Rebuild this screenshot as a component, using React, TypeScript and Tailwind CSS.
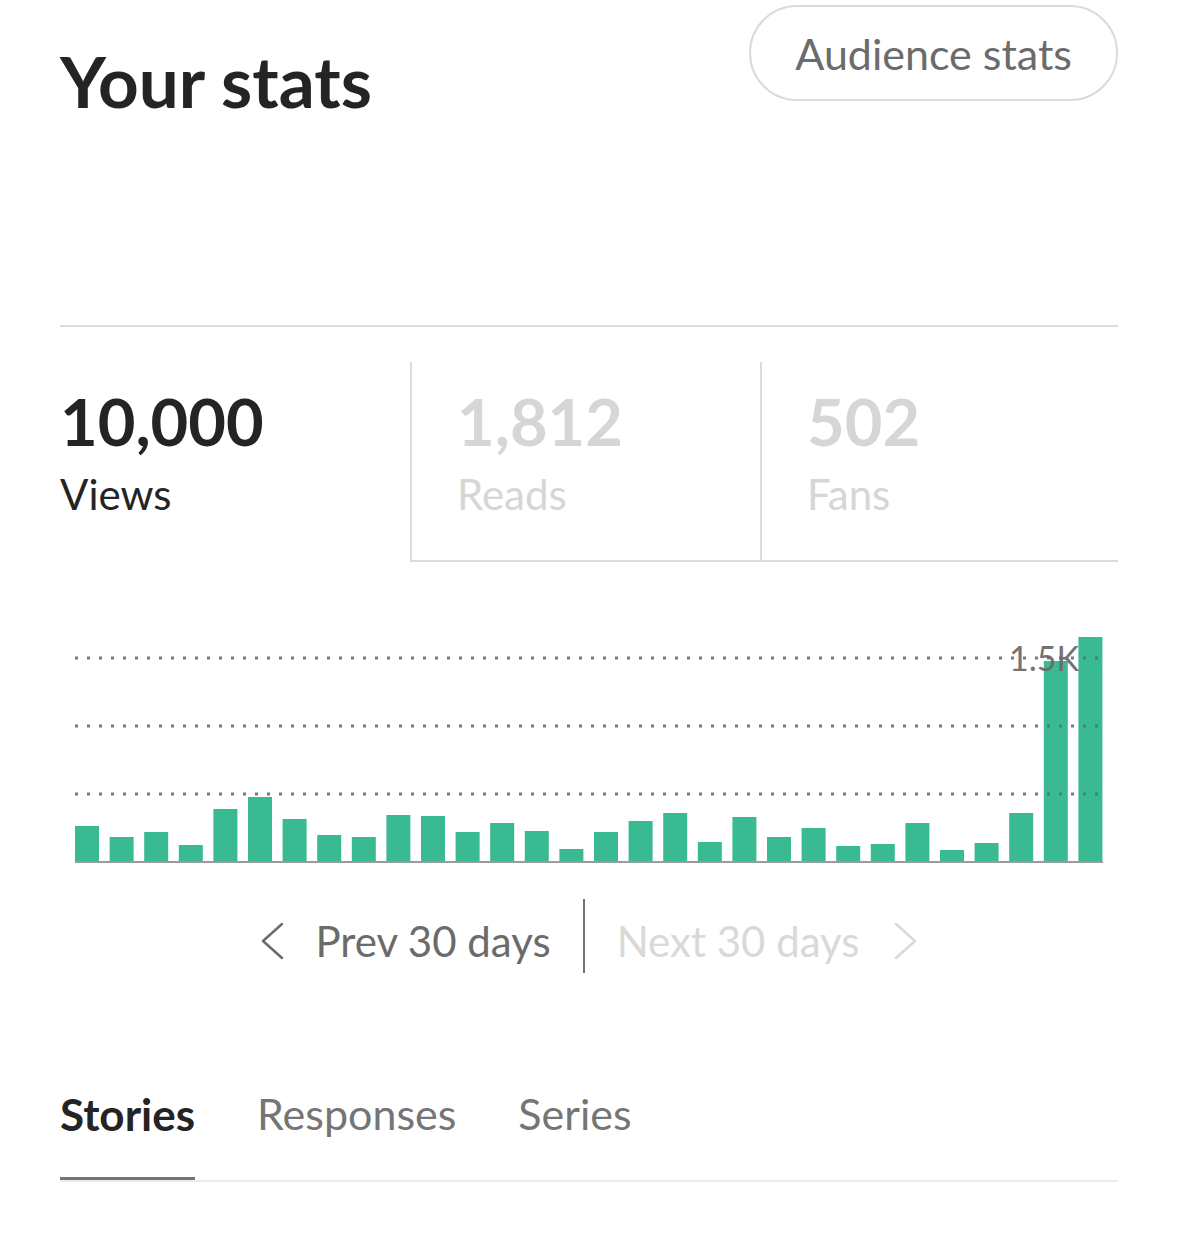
import React from 'react';

const bars = [35, 24, 29, 16, 52, 64, 42, 26, 24, 46, 45, 29, 38, 30, 12, 29, 40, 48, 19, 44, 24, 33, 15, 17, 38, 11, 18, 48, 200, 224];

const font = { fontFamily: 'Lato, "Noto Sans", sans-serif' };

const Chevron: React.FC<{ dir: 'left' | 'right'; color: string }> = ({ dir, color }) => (
  <svg width="24" height="38" viewBox="0 0 24 38" fill="none" className="shrink-0">
    <path
      d={dir === 'left' ? 'M22 2 L3 19 L22 36' : 'M2 2 L21 19 L2 36'}
      stroke={color}
      strokeWidth="2.5"
      strokeLinecap="round"
      strokeLinejoin="round"
    />
  </svg>
);

const Chart: React.FC = () => {
  const base = 230;
  return (
    <svg width="1058" height="236" viewBox="0 0 1058 236" className="block">
      {bars.map((h, i) => (
        <rect key={i} x={15 + i * 34.6} y={base - h} width="24" height={h} fill="#3aba93" />
      ))}
      <line x1="15" y1="231" x2="1043" y2="231" stroke="#7a7a7a" strokeWidth="1.5" />
      {[27, 95, 163].map((y) => (
        <line key={y} x1="15" y1={y} x2="1043" y2={y} stroke="#6b6b6b" strokeOpacity="0.9" strokeWidth="3" strokeDasharray="3 9" />
      ))}
      <text x="1019" y="40" textAnchor="end" fontSize="34" fill="#6b6b6b" fillOpacity="0.95" style={font}>
        1.5K
      </text>
    </svg>
  );
};

const Stat: React.FC<{ value: string; label: string; active?: boolean }> = ({ value, label, active }) => (
  <div className="pt-[27px]">
    <div className={`text-[65px] leading-none font-bold ${active ? 'text-[#242424]' : 'text-[#d6d6d6]'}`}>{value}</div>
    <div className={`mt-[19px] text-[42px] leading-none ${active ? 'text-[#242424]' : 'text-[#d6d6d6]'}`}>{label}</div>
  </div>
);

const App: React.FC = () => {
  return (
    <div className="min-h-screen bg-white" style={font}>
      <div className="pl-[60px] pr-[61px]">
        <header className="flex justify-between items-start">
          <h1 className="mt-[45px] text-[71px] leading-none font-bold text-[#242424]">Your stats</h1>
          <button className="mt-[5px] h-[96px] px-[44px] rounded-full border-2 border-[#dadada] text-[43px] leading-none text-[#6b6b6b]">
            Audience stats
          </button>
        </header>

        <div className="mt-[209px] border-t-2 border-[#dcdcdc]" />

        <div className="mt-[35px] flex h-[200px]">
          <div className="w-[350px]">
            <Stat value="10,000" label="Views" active />
          </div>
          <div className="w-[350px] border-l-2 border-b-2 border-[#dcdcdc] pl-[45px]">
            <Stat value="1,812" label="Reads" />
          </div>
          <div className="flex-1 border-l-2 border-b-2 border-[#dcdcdc] pl-[45px]">
            <Stat value="502" label="Fans" />
          </div>
        </div>

        <div className="mt-[69px]">
          <Chart />
        </div>

        <div className="mt-[32px] flex justify-center items-center">
          <div className="flex items-center pt-[10px]">
            <Chevron dir="left" color="#6b6b6b" />
            <span className="ml-[31px] text-[42px] leading-none text-[#6b6b6b]">Prev 30 days</span>
          </div>
          <div className="mx-[32px] w-[2px] h-[74px] bg-[#757575]" />
          <div className="flex items-center pt-[10px]">
            <span className="text-[42px] leading-none text-[#d9d9d9]">Next 30 days</span>
            <span className="ml-[34px]">
              <Chevron dir="right" color="#d9d9d9" />
            </span>
          </div>
        </div>

        <nav className="mt-[119px] flex gap-[62px] border-b-2 border-[#ebebeb]">
          <div className="pb-[41px] border-b-[3px] border-[#757575] text-[44px] leading-none font-bold text-[#242424]">Stories</div>
          <div className="pb-[41px] text-[43px] leading-none text-[#757575]">Responses</div>
          <div className="pb-[41px] text-[43px] leading-none text-[#757575]">Series</div>
        </nav>
      </div>
    </div>
  );
};

export default App;
